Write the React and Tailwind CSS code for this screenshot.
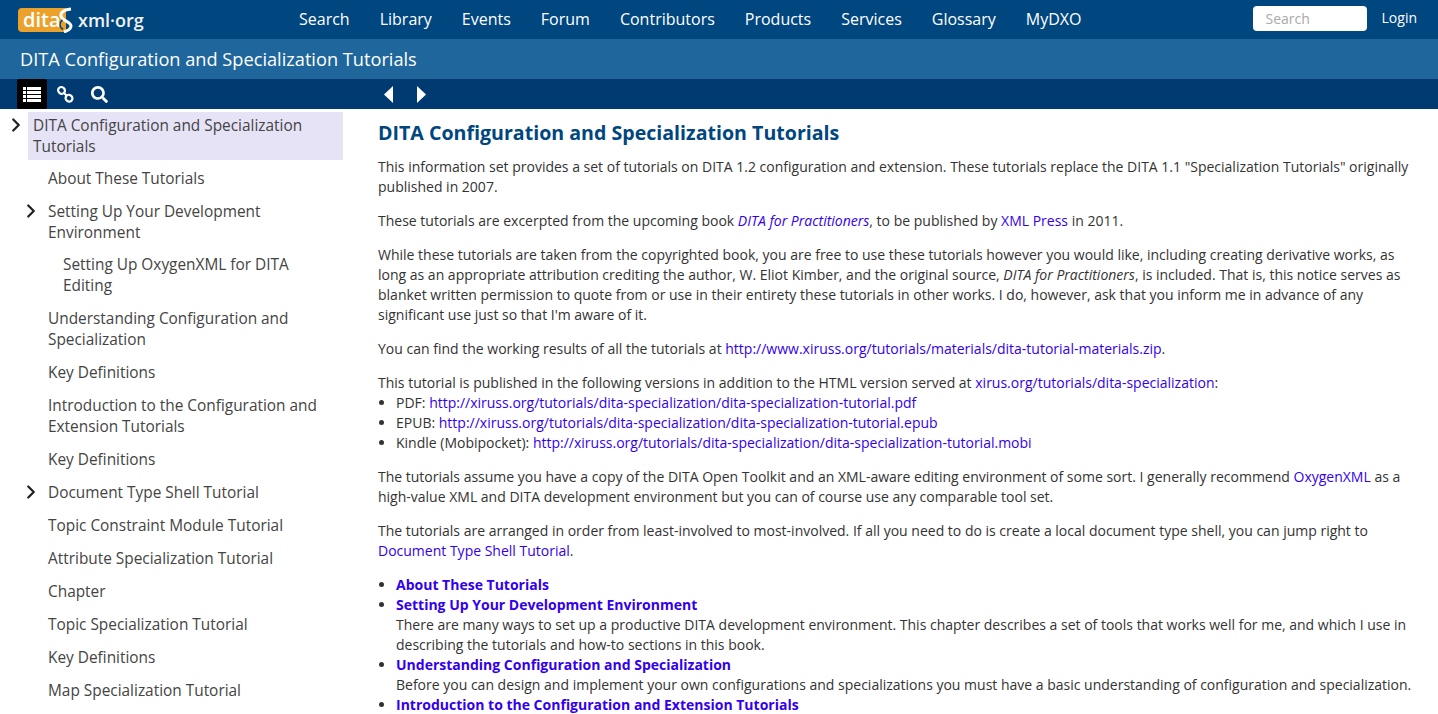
import React from "react";
import { FaSearch } from "react-icons/fa";
import { ChevronRight } from "lucide-react";

const A = ({ children, b, i }) => (
  <a className={"text-[#3300ee] " + (b ? "font-bold " : "") + (i ? "italic" : "")}>{children}</a>
);

const nav = ["Search", "Library", "Events", "Forum", "Contributors", "Products", "Services", "Glossary", "MyDXO"];

const toc = [
  { t: "About These Tutorials", l: 1 },
  { t: "Setting Up Your Development Environment", l: 1, c: true },
  { t: "Setting Up OxygenXML for DITA Editing", l: 2 },
  { t: "Understanding Configuration and Specialization", l: 1 },
  { t: "Key Definitions", l: 1 },
  { t: "Introduction to the Configuration and Extension Tutorials", l: 1 },
  { t: "Key Definitions", l: 1 },
  { t: "Document Type Shell Tutorial", l: 1, c: true },
  { t: "Topic Constraint Module Tutorial", l: 1 },
  { t: "Attribute Specialization Tutorial", l: 1 },
  { t: "Chapter", l: 1 },
  { t: "Topic Specialization Tutorial", l: 1 },
  { t: "Key Definitions", l: 1 },
  { t: "Map Specialization Tutorial", l: 1 },
];

function Logo() {
  return (
    <div className="flex items-center">
      <div className="relative h-[24px] w-[55px]">
        <svg width="55" height="26" viewBox="0 0 55 26" className="absolute top-[-1px] left-0">
          <path d="M4 1 H48 V25 H4 A4 4 0 0 1 0 21 V5 A4 4 0 0 1 4 1 Z" fill="#eba12a" />
          <path
            d="M53 2 C44 3 41 7 44 11 C47 14.5 53 15.5 53 19 C53 22 49 24 46 25"
            fill="none"
            stroke="#ffffff"
            strokeWidth="3"
          />
          <path d="M44.5 13 C41 15.5 41 20 45 22.5" fill="none" stroke="#00467f" strokeWidth="1.6" />
        </svg>
        <span className="absolute top-[-1px] left-[5px] text-[20px] leading-[26px] font-semibold text-white">dita</span>
      </div>
      <span className="ml-[5px] text-[18px] leading-[24px] font-semibold text-[#f2f2f2]">xml·org</span>
    </div>
  );
}

function ListIcon() {
  return (
    <svg width="18" height="15" viewBox="0 0 18 15" fill="#ffffff">
      <rect x="0" y="0" width="3" height="3" />
      <rect x="4" y="0" width="14" height="3" />
      <rect x="0" y="4" width="3" height="3" />
      <rect x="4" y="4" width="14" height="3" />
      <rect x="0" y="8" width="3" height="3" />
      <rect x="4" y="8" width="14" height="3" />
      <rect x="0" y="12" width="3" height="3" />
      <rect x="4" y="12" width="14" height="3" />
    </svg>
  );
}

function LinkIcon() {
  return (
    <svg width="18" height="18" viewBox="0 0 18 18" fill="none" stroke="#ffffff" strokeWidth="2.2">
      <rect x="2" y="2.2" width="7" height="6.4" rx="3.2" transform="rotate(40 5.5 5.4)" />
      <rect x="9.5" y="10" width="7" height="6.4" rx="3.2" transform="rotate(40 13 13.2)" />
      <path d="M7.5 7.5 L11 11" />
    </svg>
  );
}

export default function App() {
  return (
    <div className="flex h-[714px] flex-col overflow-hidden bg-white font-['Open_Sans',sans-serif] text-[14px] leading-[20px] text-[#333333]">
      <header className="flex h-[39px] shrink-0 items-center bg-[#00467f] text-white">
        <div className="ml-[18px] w-[281px]">
          <Logo />
        </div>
        <nav className="mb-[2px] flex gap-[30px] text-[16px]">
          {nav.map((n) => (
            <a key={n}>{n}</a>
          ))}
        </nav>
        <div className="mb-[2px] ml-auto flex items-center">
          <div className="flex h-[25px] w-[114px] items-center rounded-[4px] bg-white pl-[13px] text-[14px] text-[#a9a9a9]">
            Search
          </div>
          <a className="mr-[21px] mb-[1px] ml-[15px] text-[14px]">Login</a>
        </div>
      </header>
      <div className="flex h-[40px] shrink-0 items-center bg-[#1f669c] pl-[20px] text-[18.2px] text-white">
        DITA Configuration and Specialization Tutorials
      </div>
      <div className="flex h-[30px] shrink-0 items-center bg-[#003a70] text-white">
        <div className="ml-[17px] flex h-[30px] w-[30px] items-center justify-center rounded-[2px] bg-black">
          <ListIcon />
        </div>
        <div className="ml-[9px] flex w-[18px] justify-center">
          <LinkIcon />
        </div>
        <div className="ml-[15px] flex w-[20px] justify-center">
          <FaSearch size={17} />
        </div>
        <svg width="9" height="17" viewBox="0 0 9 17" fill="#ffffff" className="ml-[275px]">
          <path d="M9 0 V17 L0 8.5 Z" />
        </svg>
        <svg width="9" height="17" viewBox="0 0 9 17" fill="#ffffff" className="ml-[24px]">
          <path d="M0 0 V17 L9 8.5 Z" />
        </svg>
      </div>
      <div className="flex min-h-0 flex-1">
        <aside className="w-[343px] shrink-0 overflow-hidden pt-[3px] text-[15.4px] leading-[21px] text-[#444444]">
          <div className="relative ml-[28px] bg-[#e6e3f7] py-[3px] pr-[12px] pl-[5px]">
            <ChevronRight size={22} strokeWidth={2.5} className="absolute top-[2px] left-[-23px] text-[#222222]" />
            DITA Configuration and Specialization Tutorials
          </div>
          <div className="mt-[5px] flex flex-col gap-[6px]">
            {toc.map((x, i) => (
              <div
                key={i}
                className={
                  "relative py-[3px] pr-[20px] " + (x.l === 2 ? "mt-[-1px] ml-[63px]" : "ml-[48px]")
                }
              >
                {x.c && (
                  <ChevronRight size={22} strokeWidth={2.5} className="absolute top-[2px] left-[-28px] text-[#222222]" />
                )}
                {x.t}
              </div>
            ))}
          </div>
        </aside>
        <main className="min-w-0 flex-1 overflow-hidden pt-[10px] pr-[18px] pl-[35px]">
          <h1 className="text-[19.6px] leading-[28px] font-bold text-[#00467f]">
            DITA Configuration and Specialization Tutorials
          </h1>
          <p className="mt-[10px]">
            This information set provides a set of tutorials on DITA 1.2 configuration and extension. These tutorials
            replace the DITA 1.1 "Specialization Tutorials" originally published in 2007.
          </p>
          <p className="mt-[14px]">
            These tutorials are excerpted from the upcoming book <A i>DITA for Practitioners</A>, to be published by{" "}
            <A>XML Press</A> in 2011.
          </p>
          <p className="mt-[14px]">
            While these tutorials are taken from the copyrighted book, you are free to use these tutorials however you
            would like, including creating derivative works, as long as an appropriate attribution crediting the
            author, W. Eliot Kimber, and the original source, <i>DITA for Practitioners</i>, is included. That is, this
            notice serves as blanket written permission to quote from or use in their entirety these tutorials in other
            works. I do, however, ask that you inform me in advance of any significant use just so that I'm aware of
            it.
          </p>
          <p className="mt-[14px]">
            You can find the working results of all the tutorials at{" "}
            <A>http://www.xiruss.org/tutorials/materials/dita-tutorial-materials.zip</A>.
          </p>
          <p className="mt-[14px]">
            This tutorial is published in the following versions in addition to the HTML version served at{" "}
            <A>xirus.org/tutorials/dita-specialization</A>:
          </p>
          <ul className="list-disc pl-[18px]">
            <li>
              PDF: <A>http://xiruss.org/tutorials/dita-specialization/dita-specialization-tutorial.pdf</A>
            </li>
            <li>
              EPUB: <A>http://xiruss.org/tutorials/dita-specialization/dita-specialization-tutorial.epub</A>
            </li>
            <li>
              Kindle (Mobipocket): <A>http://xiruss.org/tutorials/dita-specialization/dita-specialization-tutorial.mobi</A>
            </li>
          </ul>
          <p className="mt-[14px]">
            The tutorials assume you have a copy of the DITA Open Toolkit and an XML-aware editing environment of some
            sort. I generally recommend <A>OxygenXML</A> as a high-value XML and DITA development environment but you
            can of course use any comparable tool set.
          </p>
          <p className="mt-[14px]">
            The tutorials are arranged in order from least-involved to most-involved. If all you need to do is create a
            local document type shell, you can jump right to <A>Document Type Shell Tutorial</A>.
          </p>
          <ul className="mt-[14px] list-disc pl-[18px]">
            <li>
              <A b>About These Tutorials</A>
            </li>
            <li>
              <A b>Setting Up Your Development Environment</A>
              <br />
              There are many ways to set up a productive DITA development environment. This chapter describes a set of
              tools that works well for me, and which I use in describing the tutorials and how-to sections in this
              book.
            </li>
            <li>
              <A b>Understanding Configuration and Specialization</A>
              <br />
              Before you can design and implement your own configurations and specializations you must have a basic
              understanding of configuration and specialization.
            </li>
            <li>
              <A b>Introduction to the Configuration and Extension Tutorials</A>
            </li>
          </ul>
        </main>
      </div>
    </div>
  );
}
